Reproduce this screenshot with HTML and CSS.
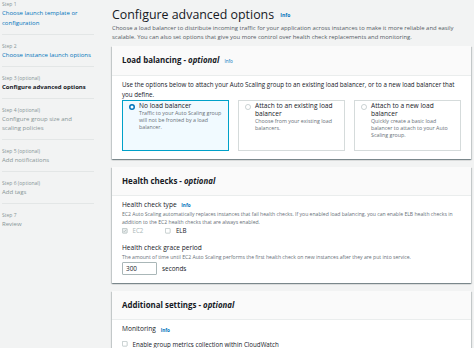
FILE: index.html
```html
<!DOCTYPE html>
<html lang="en">

<head>
    <meta charset="UTF-8">
    <meta name="viewport" content="width=device-width, initial-scale=1.0">
    <title>Configure advanced options</title>
    <link rel="stylesheet" href="styles.css">
</head>

<body>
    <div class="layout">
        <!-- Wizard steps -->
        <nav class="steps">
            <div class="step">
                <div class="step-label">Step 1</div>
                <a class="step-title link" href="#">Choose launch template or<br>configuration</a>
            </div>
            <div class="step">
                <div class="step-label">Step 2</div>
                <a class="step-title link" href="#">Choose instance launch options</a>
            </div>
            <div class="step">
                <div class="step-label">Step 3 (optional)</div>
                <div class="step-title current">Configure advanced options</div>
            </div>
            <div class="step">
                <div class="step-label">Step 4 (optional)</div>
                <div class="step-title disabled">Configure group size and<br>scaling policies</div>
            </div>
            <div class="step">
                <div class="step-label">Step 5 (optional)</div>
                <div class="step-title disabled">Add notifications</div>
            </div>
            <div class="step">
                <div class="step-label">Step 6 (optional)</div>
                <div class="step-title disabled">Add tags</div>
            </div>
            <div class="step last">
                <div class="step-label">Step 7</div>
                <div class="step-title disabled">Review</div>
            </div>
        </nav>

        <main class="content">
            <h1>Configure advanced options <a class="info" href="#">Info</a></h1>
            <p class="lead">Choose a load balancer to distribute incoming traffic for your application across instances to make it more reliable and easily scalable. You can also set options that give you more control over health check replacements and monitoring.</p>

            <!-- Load balancing -->
            <section class="card">
                <div class="card-header">
                    <h2>Load balancing - <em>optional</em> <a class="info" href="#">Info</a></h2>
                </div>
                <div class="card-body">
                    <p class="body-text">Use the options below to attach your Auto Scaling group to an existing load balancer, or to a new load balancer that you define.</p>
                    <div class="tiles">
                        <label class="tile selected">
                            <svg class="radio" viewBox="0 0 8 8"><circle cx="4" cy="4" r="3" fill="#fff" stroke="#0073bb" stroke-width="2"/><circle cx="4" cy="4" r="1" fill="#fff"/></svg>
                            <span class="tile-text">
                                <span class="tile-title">No load balancer</span>
                                <span class="tile-desc">Traffic to your Auto Scaling group<br>will not be fronted by a load<br>balancer.</span>
                            </span>
                        </label>
                        <label class="tile">
                            <svg class="radio" viewBox="0 0 8 8"><circle cx="4" cy="4" r="3.4" fill="#fff" stroke="#aab7b8" stroke-width="0.8"/></svg>
                            <span class="tile-text">
                                <span class="tile-title">Attach to an existing load<br>balancer</span>
                                <span class="tile-desc">Choose from your existing load<br>balancers.</span>
                            </span>
                        </label>
                        <label class="tile">
                            <svg class="radio" viewBox="0 0 8 8"><circle cx="4" cy="4" r="3.4" fill="#fff" stroke="#aab7b8" stroke-width="0.8"/></svg>
                            <span class="tile-text">
                                <span class="tile-title">Attach to a new load<br>balancer</span>
                                <span class="tile-desc">Quickly create a basic load<br>balancer to attach to your Auto<br>Scaling group.</span>
                            </span>
                        </label>
                    </div>
                </div>
            </section>

            <!-- Health checks -->
            <section class="card">
                <div class="card-header">
                    <h2>Health checks - <em>optional</em></h2>
                </div>
                <div class="card-body">
                    <div class="field-label">Health check type <a class="info" href="#">Info</a></div>
                    <p class="field-desc">EC2 Auto Scaling automatically replaces instances that fail health checks. If you enabled load balancing, you can enable ELB health checks in addition to the EC2 health checks that are always enabled.</p>
                    <div class="checks">
                        <span class="check disabled">
                            <svg class="box" viewBox="0 0 8 8"><rect x="0.5" y="0.5" width="7" height="7" rx="1" fill="#eaeded" stroke="#aab7b8"/><path d="M2 4.2l1.4 1.4L6 2.6" fill="none" stroke="#aab7b8" stroke-width="1"/></svg>
                            EC2
                        </span>
                        <span class="check">
                            <svg class="box" viewBox="0 0 8 8"><rect x="0.5" y="0.5" width="7" height="7" rx="1" fill="#fff" stroke="#aab7b8"/></svg>
                            ELB
                        </span>
                    </div>

                    <div class="field-label spaced">Health check grace period</div>
                    <p class="field-desc">The amount of time until EC2 Auto Scaling performs the first health check on new instances after they are put into service.</p>
                    <div class="grace">
                        <input class="text-input" type="text" value="300">
                        <span>seconds</span>
                    </div>
                </div>
            </section>

            <!-- Additional settings -->
            <section class="card">
                <div class="card-header">
                    <h2>Additional settings - <em>optional</em></h2>
                </div>
                <div class="card-body">
                    <div class="field-label">Monitoring <a class="info" href="#">Info</a></div>
                    <div class="checks roomy">
                        <span class="check">
                            <svg class="box" viewBox="0 0 8 8"><rect x="0.5" y="0.5" width="7" height="7" rx="1" fill="#fff" stroke="#aab7b8"/></svg>
                            Enable group metrics collection within CloudWatch
                        </span>
                    </div>
                </div>
            </section>
        </main>
    </div>
</body>

</html>
```

FILE: styles.css
```css
body {
    margin: 0;
    background-color: #f2f3f3;
    color: #16191f;
    font-family: "Open Sans", sans-serif;
}

a {
    text-decoration: none;
}

.layout {
    display: flex;
    align-items: flex-start;
}

/* wizard steps */
.steps {
    width: 92px;
    margin-left: 2px;
    margin-right: 18px;
    flex-shrink: 0;
}

.step {
    padding: 7px 0 5.5px;
    border-bottom: 1px solid #e3e6e6;
}

.step:first-child {
    padding-top: 0;
}

.step.last {
    border-bottom: none;
}

.step-label {
    font-size: 5px;
    line-height: 9px;
    color: #879596;
}

.step-title {
    display: block;
    font-size: 6px;
    line-height: 9.5px;
    white-space: nowrap;
}

.step-title.link {
    color: #0073bb;
}

.step-title.current {
    font-weight: bold;
    color: #16191f;
}

.step-title.disabled {
    color: #879596;
}

/* main column */
.content {
    flex: 1;
    padding: 6px 3px 0 0;
    min-width: 0;
}

.content h1 {
    margin: 0;
    font-size: 12.4px;
    font-weight: normal;
    line-height: 17px;
}

.info {
    font-size: 4.6px;
    font-weight: bold;
    color: #0073bb;
    margin-left: 3px;
    vertical-align: middle;
}

.content h1 .info {
    font-size: 5px;
}

.lead {
    margin: 0 0 4px;
    font-size: 5.9px;
    line-height: 9px;
    color: #545b64;
}

.card {
    background: #ffffff;
    margin-bottom: 8px;
    box-shadow: 0 1px 1px 0 rgba(0, 28, 36, 0.3), 1px 1px 1px 0 rgba(0, 28, 36, 0.15), -1px 1px 1px 0 rgba(0, 28, 36, 0.15);
}

.card-header {
    background: #fafafa;
    border-bottom: 1px solid #eaeded;
    padding: 8px 10px;
}

.card-header h2 {
    margin: 0;
    font-size: 7.9px;
    line-height: 12px;
    font-weight: bold;
}

.card-header h2 .info {
    font-weight: normal;
}

.card-body {
    padding: 4px 10px 8px;
}

.body-text {
    margin: 0;
    font-size: 6.2px;
    line-height: 10px;
}

/* load balancer tiles */
.tiles {
    display: grid;
    grid-template-columns: repeat(3, 1fr);
    gap: 9px;
}

.tile {
    display: flex;
    gap: 4px;
    height: 51px;
    box-sizing: border-box;
    padding: 1px 2px 3px 6px;
    border: 1px solid #d5dbdb;
    white-space: nowrap;
}

.tile.selected {
    background: #f1faff;
    border-color: #00a1c9;
}

.radio {
    width: 6px;
    height: 6px;
    flex-shrink: 0;
    margin-top: 2px;
}

.tile-text {
    display: flex;
    flex-direction: column;
}

.tile-title {
    font-size: 6.6px;
    line-height: 8px;
}

.tile-desc {
    font-size: 5.3px;
    line-height: 7px;
    color: #687078;
}

/* form fields */
.field-label {
    font-size: 6.6px;
    line-height: 10px;
}

.field-label.spaced {
    margin-top: 8px;
}

.field-desc {
    margin: 0;
    font-size: 5.1px;
    line-height: 8px;
    color: #687078;
}

.checks {
    display: flex;
    gap: 22px;
    height: 9px;
    align-items: center;
}

.checks.roomy {
    margin-top: 5px;
}

.check {
    display: flex;
    align-items: center;
    gap: 5px;
    font-size: 6.2px;
}

.check.disabled {
    color: #aab7b8;
}

.box {
    width: 5.5px;
    height: 5.5px;
}

.grace {
    display: flex;
    align-items: center;
    gap: 5px;
    margin-top: 1px;
    font-size: 6.4px;
}

.text-input {
    width: 35px;
    height: 13px;
    box-sizing: border-box;
    padding: 0 3px;
    border: 1px solid #aab7b8;
    border-radius: 1px;
    font-family: inherit;
    font-size: 6.4px;
    color: #16191f;
}
```
